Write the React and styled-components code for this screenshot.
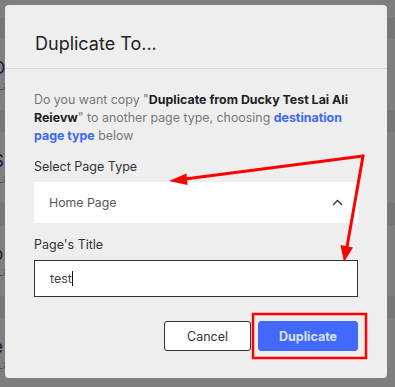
import styled, { createGlobalStyle } from "styled-components"

const Global = createGlobalStyle`
    html, body {
        margin: 0;
        padding: 0;
        background: #ffffff;
    }
    body {
        font-family: Inter, "Noto Sans", sans-serif;
    }
`

const rows = ["D", "S", "o", "e"]

function App () {
    return (
        <Page>
            <Global />
            <BehindList>
                {rows.map((letter) => (
                    <BehindRow key={letter}>
                        <BehindBand />
                        <BehindBody>
                            <BehindTitle>{letter}</BehindTitle>
                            <BehindSub>La</BehindSub>
                        </BehindBody>
                    </BehindRow>
                ))}
            </BehindList>

            <Overlay>
                <Modal>
                    <Header>
                        <h2>Duplicate To...</h2>
                    </Header>
                    <Body>
                        <Intro>
                            Do you want copy "<strong>Duplicate from Ducky Test Lai Ali Reievw</strong>" to another page type, choosing <a>destination page type</a> below
                        </Intro>

                        <Label>Select Page Type</Label>
                        <Select>
                            <span>Home Page</span>
                            <svg width="11" height="7" viewBox="0 0 11 7">
                                <polyline points="1,6 5.5,1.5 10,6" fill="none" stroke="#333" strokeWidth="1.4" />
                            </svg>
                        </Select>

                        <Label $gap={13}>Page's Title</Label>
                        <Field>
                            test<Caret />
                        </Field>

                        <Actions>
                            <Button>Cancel</Button>
                            <Button $primary>Duplicate</Button>
                        </Actions>
                    </Body>
                </Modal>
            </Overlay>

            <Annotations width="395" height="387" viewBox="0 0 395 387">
                <g stroke="#ff0000" strokeWidth="3" fill="none" strokeLinecap="round">
                    <line x1="363" y1="156" x2="185" y2="179" />
                    <line x1="363" y1="156" x2="347" y2="247" />
                    <rect x="253" y="314" width="113" height="44" strokeWidth="2.5" />
                </g>
                <g fill="#ff0000">
                    <polygon points="169,181 186.5,173.5 187.5,185" />
                    <polygon points="344,262 340.5,245 353,247.5" />
                </g>
            </Annotations>
        </Page>
    )
}

const Page = styled.div`
    position: relative;
    width: 395px;
    height: 387px;
    overflow: hidden;
`

const BehindList = styled.div`
    padding-top: 17px;
`

const BehindRow = styled.div`
    display: flex;
    flex-direction: column;
`

const BehindBand = styled.div`
    height: 22px;
    background: #eeeeee;
`

const BehindBody = styled.div`
    height: 71px;
    display: flex;
    flex-direction: column;
    padding-top: 19px;
    box-sizing: border-box;
    margin-left: -7px;
`

const BehindTitle = styled.div`
    font-size: 17px;
    line-height: 20px;
    color: #1d3f7a;
`

const BehindSub = styled.div`
    font-size: 11px;
    line-height: 14px;
    color: #aaaaaa;
    margin-top: 1px;
    margin-left: 4px;
`

const Overlay = styled.div`
    position: absolute;
    inset: 0;
    background: rgba(0, 0, 0, 0.5);
    padding: 5px 8px 9px 5px;
    box-sizing: border-box;
    display: flex;
`

const Modal = styled.div`
    flex: 1;
    background: #eeeeee;
    border-radius: 4px;
    display: flex;
    flex-direction: column;
`

const Header = styled.div`
    padding: 27px 30px 12px;
    border-bottom: 1px solid #dcdcdc;

    h2 {
        margin: 0;
        font-size: 18px;
        line-height: 24px;
        font-weight: 400;
        color: #222;
    }
`

const Body = styled.div`
    padding: 22px 29px 28px 29px;
    display: flex;
    flex-direction: column;
`

const Intro = styled.p`
    margin: 0;
    font-size: 12.4px;
    line-height: 18px;
    color: #777;

    strong {
        color: #222;
        font-weight: 700;
    }

    a {
        color: #3d68f5;
        font-weight: 700;
    }
`

const Label = styled.div`
    margin-top: ${(p) => (p.$gap || 13)}px;
    font-size: 12.5px;
    line-height: 18px;
    color: #333;
`

const Select = styled.div`
    margin-top: 6px;
    height: 41px;
    background: #ffffff;
    display: flex;
    align-items: center;
    justify-content: space-between;
    padding: 0 15px 0 15px;
    font-size: 12.3px;
    color: #555;
`

const Field = styled.div`
    margin-top: 6px;
    height: 37px;
    background: #ffffff;
    border: 1px solid #333;
    box-sizing: border-box;
    display: flex;
    align-items: center;
    padding-left: 15px;
    font-size: 12.5px;
    color: #444;
`

const Caret = styled.span`
    display: inline-block;
    width: 1px;
    height: 15px;
    background: #111;
`

const Actions = styled.div`
    margin-top: 24px;
    display: flex;
    justify-content: flex-end;
    gap: 7px;
`

const Button = styled.button`
    height: 30px;
    width: ${(p) => (p.$primary ? 100 : 87)}px;
    border-radius: 3px;
    font-family: Inter, "Noto Sans", sans-serif;
    font-size: 12.5px;
    cursor: pointer;
    border: 1px solid ${(p) => (p.$primary ? "#4169ff" : "#333")};
    background: ${(p) => (p.$primary ? "#4169ff" : "#ffffff")};
    color: ${(p) => (p.$primary ? "#d9e1ff" : "#333")};
    font-weight: ${(p) => (p.$primary ? 700 : 400)};
`

const Annotations = styled.svg`
    position: absolute;
    left: 0;
    top: 0;
    pointer-events: none;
`

export default App
